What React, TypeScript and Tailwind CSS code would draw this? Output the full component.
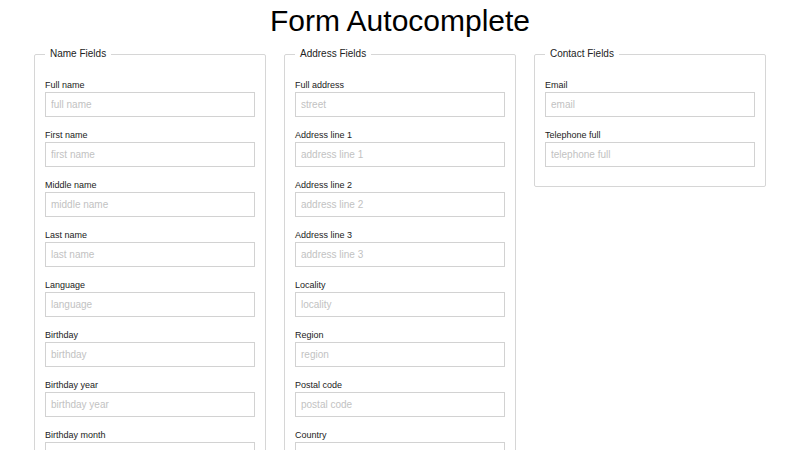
import React from 'react';

interface Field {
    label: string;
    placeholder: string;
}

const nameFields: Field[] = [
    { label: 'Full name', placeholder: 'full name' },
    { label: 'First name', placeholder: 'first name' },
    { label: 'Middle name', placeholder: 'middle name' },
    { label: 'Last name', placeholder: 'last name' },
    { label: 'Language', placeholder: 'language' },
    { label: 'Birthday', placeholder: 'birthday' },
    { label: 'Birthday year', placeholder: 'birthday year' },
    { label: 'Birthday month', placeholder: 'birthday month' },
    { label: 'Birthday day', placeholder: 'birthday day' },
];

const addressFields: Field[] = [
    { label: 'Full address', placeholder: 'street' },
    { label: 'Address line 1', placeholder: 'address line 1' },
    { label: 'Address line 2', placeholder: 'address line 2' },
    { label: 'Address line 3', placeholder: 'address line 3' },
    { label: 'Locality', placeholder: 'locality' },
    { label: 'Region', placeholder: 'region' },
    { label: 'Postal code', placeholder: 'postal code' },
    { label: 'Country', placeholder: 'country' },
    { label: 'Country name', placeholder: 'country name' },
];

const contactFields: Field[] = [
    { label: 'Email', placeholder: 'email' },
    { label: 'Telephone full', placeholder: 'telephone full' },
];

const FieldGroup: React.FC<{ title: string; fields: Field[] }> = ({ title, fields }) => (
    <fieldset className="w-[232px] rounded-[2px] border border-[#d6d6d6] px-[10px] pb-[19px]">
        <legend className="px-[5px] text-[10px] leading-[12px] text-[#222]">{title}</legend>
        <div className="flex flex-col gap-[13px] pt-[20px]">
            {fields.map((f) => (
                <label key={f.label} className="flex flex-col">
                    <span className="mb-[1px] text-[9px] leading-[11px] text-[#222]">{f.label}</span>
                    <input
                        type="text"
                        placeholder={f.placeholder}
                        className="h-[25px] w-[210px] border border-[#d2d2d2] bg-white px-[5px] text-[10px] text-[#222] outline-none placeholder:text-[#c2c2c2]"
                    />
                </label>
            ))}
        </div>
    </fieldset>
);

export default function App() {
    return (
        <div className="h-[450px] w-[800px] overflow-hidden bg-white font-['Liberation_Sans',Arial,sans-serif]">
            <h1 className="mt-[4px] text-center text-[30px] leading-[34px] text-black">Form Autocomplete</h1>
            <div className="mt-[10px] flex items-start justify-center gap-[18px]">
                <FieldGroup title="Name Fields" fields={nameFields} />
                <FieldGroup title="Address Fields" fields={addressFields} />
                <FieldGroup title="Contact Fields" fields={contactFields} />
            </div>
        </div>
    );
}
